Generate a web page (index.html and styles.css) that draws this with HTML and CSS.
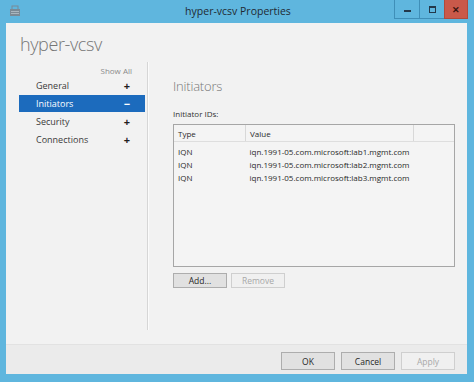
FILE: index.html
```html
<!DOCTYPE html>
<html lang="en">
<head>
    <meta charset="UTF-8">
    <meta name="viewport" content="width=device-width, initial-scale=1.0">
    <title>hyper-vcsv Properties</title>
    <link rel="stylesheet" href="styles.css">
</head>
<body>
    <div class="window">
        <div class="titlebar">
            <svg class="app-icon" width="12" height="12" viewBox="0 0 12 12">
                <rect x="1" y="4" width="10" height="7" fill="#7b8a95"/>
                <rect x="3" y="1" width="6" height="4" fill="none" stroke="#7b8a95" stroke-width="1"/>
                <rect x="2" y="6" width="8" height="1" fill="#a9b6bf"/>
                <rect x="2" y="8" width="8" height="1" fill="#a9b6bf"/>
            </svg>
            <div class="title">hyper-vcsv Properties</div>
            <div class="win-buttons">
                <div class="win-btn"><span class="min-glyph"></span></div>
                <div class="win-btn"><span class="max-glyph"></span></div>
                <div class="win-btn win-close">&#x2715;</div>
            </div>
        </div>

        <div class="client">
            <div class="main">
                <h1 class="host">hyper-vcsv</h1>
                <div class="body">
                    <div class="nav">
                        <div class="show-all">Show All</div>
                        <div class="nav-item"><span>General</span><span class="sign">+</span></div>
                        <div class="nav-item active"><span>Initiators</span><span class="sign">&minus;</span></div>
                        <div class="nav-item"><span>Security</span><span class="sign">+</span></div>
                        <div class="nav-item"><span>Connections</span><span class="sign">+</span></div>
                    </div>
                    <div class="separator"></div>
                    <div class="pane">
                        <h2 class="pane-title">Initiators</h2>
                        <div class="field-label">Initiator IDs:</div>
                        <div class="list">
                            <table>
                                <thead>
                                    <tr>
                                        <th class="col-type">Type</th>
                                        <th class="col-value">Value</th>
                                        <th></th>
                                    </tr>
                                </thead>
                                <tbody>
                                    <tr><td>IQN</td><td>iqn.1991-05.com.microsoft:lab1.mgmt.com</td><td></td></tr>
                                    <tr><td>IQN</td><td>iqn.1991-05.com.microsoft:lab2.mgmt.com</td><td></td></tr>
                                    <tr><td>IQN</td><td>iqn.1991-05.com.microsoft:lab3.mgmt.com</td><td></td></tr>
                                </tbody>
                            </table>
                        </div>
                        <div class="list-buttons">
                            <button class="btn">Add...</button>
                            <button class="btn" disabled>Remove</button>
                        </div>
                    </div>
                </div>
            </div>
            <div class="footer">
                <button class="btn btn-footer">OK</button>
                <button class="btn btn-footer">Cancel</button>
                <button class="btn btn-footer" disabled>Apply</button>
            </div>
        </div>
    </div>
</body>
</html>
```

FILE: styles.css
```css
body {
    margin: 0;
    font-family: "Open Sans", "Noto Sans", sans-serif;
}
.window {
    width: 474px;
    height: 382px;
    box-sizing: border-box;
    background-color: #5fb6de;
    padding: 0 7px 8px 6px;
    display: flex;
    flex-direction: column;
}
.titlebar {
    height: 23px;
    display: flex;
    align-items: flex-start;
}
.app-icon {
    margin: 5px 0 0 3px;
}
.title {
    flex: 1;
    text-align: center;
    font-size: 10.5px;
    line-height: 22px;
    color: #1f2a33;
    margin-left: 60px;
}
.win-buttons {
    display: flex;
    margin-right: -1px;
}
.win-btn {
    width: 24px;
    height: 18px;
    border: 1px solid #3f8fb8;
    border-top: none;
    margin-left: -1px;
    display: flex;
    align-items: center;
    justify-content: center;
}
.min-glyph {
    width: 7px;
    height: 2px;
    margin-top: 4px;
    background-color: #23384a;
}
.max-glyph {
    width: 5px;
    height: 4px;
    border: 1px solid #23384a;
    border-top-width: 2px;
}
.win-close {
    width: 22px;
    background-color: #c9594a;
    border-color: #b04a3c;
    color: #3a1410;
    font-size: 9px;
    font-weight: bold;
}
.client {
    flex: 1;
    background-color: #f2f2f2;
    display: flex;
    flex-direction: column;
}
.main {
    flex: 1;
    display: flex;
    flex-direction: column;
}
.host {
    margin: 0;
    padding: 9px 0 0 14px;
    font-size: 18px;
    line-height: 24px;
    font-weight: 300;
    letter-spacing: -0.4px;
    color: #767676;
}
.body {
    flex: 1;
    display: flex;
    padding-top: 6px;
    padding-bottom: 14px;
}
.nav {
    width: 126px;
    margin-left: 13px;
    padding-top: 3px;
}
.show-all {
    text-align: right;
    font-size: 8px;
    line-height: 12px;
    color: #8a8a8a;
    padding-right: 13px;
}
.nav-item {
    height: 17px;
    margin-bottom: 1px;
    display: flex;
    align-items: center;
    justify-content: space-between;
    padding: 0 15px 0 17px;
    font-size: 9px;
    color: #3a3a3a;
}
.nav-item .sign {
    font-weight: bold;
    font-size: 11px;
    color: #1e1e1e;
}
.nav-item.active {
    background-color: #1c6bbd;
    color: #ffffff;
}
.nav-item.active .sign {
    color: #ffffff;
}
.separator {
    width: 1px;
    margin-left: 2px;
    background-color: #d6d6d6;
    border-right: 1px solid #fbfbfb;
}
.pane {
    flex: 1;
    padding: 14px 12px 0 24px;
}
.pane-title {
    margin: 0;
    font-size: 13px;
    line-height: 20px;
    font-weight: 300;
    letter-spacing: -0.2px;
    color: #777777;
}
.field-label {
    margin-top: 12px;
    font-size: 8px;
    line-height: 12px;
    color: #333333;
}
.list {
    margin-top: 4px;
    height: 141px;
    border: 1px solid #a6a6a6;
    background-color: #f4f4f4;
}
table {
    width: 100%;
    border-collapse: collapse;
    font-size: 8px;
    color: #2a2a2a;
}
th {
    height: 16px;
    padding: 0 4px;
    text-align: left;
    font-weight: normal;
    border-bottom: 1px solid #dedede;
    border-right: 1px solid #d8d8d8;
}
th:last-child {
    border-right: none;
}
.col-type {
    width: 63px;
}
.col-value {
    width: 158px;
}
td {
    height: 13px;
    padding: 0 4px;
    white-space: nowrap;
}
tbody tr:first-child td {
    padding-top: 3px;
}
.list-buttons {
    margin-top: 6px;
    display: flex;
    gap: 4px;
}
.btn {
    width: 54px;
    height: 15px;
    padding: 0;
    font-family: "Open Sans", "Noto Sans", sans-serif;
    font-size: 8.5px;
    color: #262626;
    background-color: #e1e1e1;
    border: 1px solid #adadad;
}
.btn:disabled {
    color: #a8a8a8;
    background-color: #f0f0f0;
    border-color: #cfcfcf;
}
.footer {
    height: 30px;
    box-sizing: border-box;
    border-top: 1px solid #e2e2e2;
    background-color: #ebebeb;
    display: flex;
    justify-content: flex-end;
    align-items: flex-start;
    gap: 6px;
    padding: 7px 12px 0 0;
}
.btn-footer {
    height: 18px;
    width: 54px;
}
```
